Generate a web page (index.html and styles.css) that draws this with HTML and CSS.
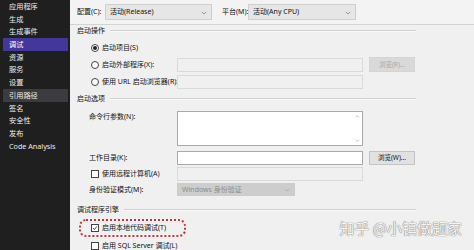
FILE: index.html
```html
<!DOCTYPE html>
<html lang="zh-CN">
<head>
    <meta charset="UTF-8">
    <title>调试</title>
    <link rel="stylesheet" href="styles.css">
</head>
<body>

<div class="sidebar">
    <div class="nav-item">应用程序</div>
    <div class="nav-item">生成</div>
    <div class="nav-item">生成事件</div>
    <div class="nav-item selected">调试</div>
    <div class="nav-item">资源</div>
    <div class="nav-item">服务</div>
    <div class="nav-item">设置</div>
    <div class="nav-item hover">引用路径</div>
    <div class="nav-item">签名</div>
    <div class="nav-item">安全性</div>
    <div class="nav-item">发布</div>
    <div class="nav-item">Code Analysis</div>
</div>

<div class="main">
    <!-- config / platform -->
    <div class="top-row">
        <span class="top-label">配置(C):</span>
        <div class="select config-select">活动(Release)<svg class="chev" viewBox="0 0 8 5"><polyline points="1,1 4,4 7,1"/></svg></div>
        <span class="top-label platform-label">平台(M):</span>
        <div class="select platform-select">活动(Any CPU)<svg class="chev" viewBox="0 0 8 5"><polyline points="1,1 4,4 7,1"/></svg></div>
    </div>

    <div class="content">
        <div class="group-header"><span>启动操作</span><div class="rule"></div></div>

        <div class="row radio-row first">
            <span class="radio checked"></span><span class="opt-text">启动项目(S)</span>
        </div>
        <div class="row radio-row">
            <span class="radio"></span><span class="opt-text field-label">启动外部程序(X):</span>
            <div class="textbox disabled"></div>
            <div class="button disabled">浏览(R)...</div>
        </div>
        <div class="row radio-row">
            <span class="radio"></span><span class="opt-text field-label">使用 URL 启动浏览器(R):</span>
            <div class="textbox disabled"></div>
        </div>

        <div class="group-header second"><span>启动选项</span><div class="rule"></div></div>

        <div class="row args-row">
            <span class="plain-label">命令行参数(N):</span>
            <div class="textarea">
                <svg class="scroll-up" viewBox="0 0 6 4"><polyline points="1,3 3,1 5,3"/></svg>
                <svg class="scroll-down" viewBox="0 0 6 4"><polyline points="1,1 3,3 5,1"/></svg>
            </div>
        </div>
        <div class="row dir-row">
            <span class="plain-label">工作目录(K):</span>
            <div class="textbox"></div>
            <div class="button">浏览(W)...</div>
        </div>
        <div class="row remote-row">
            <span class="checkbox"></span><span class="opt-text field-label">使用远程计算机(A)</span>
            <div class="textbox disabled"></div>
        </div>
        <div class="row auth-row">
            <span class="plain-label">身份验证模式(M):</span>
            <div class="select auth-select">Windows 身份验证<svg class="chev" viewBox="0 0 8 5"><polyline points="1,1 4,4 7,1"/></svg></div>
        </div>

        <div class="group-header third"><span>调试程序引擎</span><div class="rule"></div></div>

        <div class="highlight">
            <span class="checkbox"><svg viewBox="0 0 8 8"><polyline points="1.5,4 3.3,6 6.5,1.8"/></svg></span><span class="opt-text">启用本地代码调试(T)</span>
        </div>
        <div class="row sql-row">
            <span class="checkbox"></span><span class="opt-text">启用 SQL Server 调试(L)</span>
        </div>
    </div>

    <div class="watermark">知乎 @小镇做题家</div>
</div>

</body>
</html>
```

FILE: styles.css
```css
html, body {
    margin: 0;
    padding: 0;
    width: 474px;
    height: 250px;
    overflow: hidden;
}

body {
    display: flex;
    font-family: "Noto Sans", "Noto Sans CJK SC", sans-serif;
    font-size: 7px;
    line-height: 12px;
    color: #111;
    white-space: nowrap;
}

.sidebar {
    width: 70px;
    flex-shrink: 0;
    background-color: #1f1f1f;
    padding: 0 2px 0 3px;
    box-sizing: border-box;
}

.nav-item {
    height: 12.7px;
    line-height: 12.7px;
    padding-left: 6px;
    color: #ececec;
    font-size: 7.2px;
}

.nav-item.selected {
    background-color: #43379a;
    color: #fff;
}

.nav-item.hover {
    background-color: #3c3c40;
}

.main {
    flex: 1;
    position: relative;
    background-color: #f0f0f0;
}

.top-row {
    height: 24px;
    display: flex;
    align-items: center;
    padding-left: 7px;
    border-bottom: 1px solid #d3d3d3;
    background-color: #f3f3f3;
}

.top-label {
    width: 28px;
    flex-shrink: 0;
}

.platform-label {
    margin-left: 10px;
    width: 26px;
}

.select {
    height: 16px;
    box-sizing: border-box;
    border: 1px solid #cfcfcf;
    background-color: #e6e6e6;
    display: flex;
    align-items: center;
    padding-left: 4px;
    position: relative;
    flex-shrink: 0;
}

.config-select {
    width: 107px;
}

.platform-select {
    width: 108px;
}

.chev {
    position: absolute;
    right: 4px;
    top: 6px;
    width: 6px;
    height: 4px;
    fill: none;
    stroke: #777;
    stroke-width: 1;
}

.content {
    width: 339px;
    padding-left: 7px;
}

.group-header {
    height: 12px;
    display: flex;
    align-items: center;
}

.group-header span {
    margin-right: 5px;
}

.group-header.second {
    margin-top: 3px;
}

.group-header.third {
    margin-top: 8px;
}

.rule {
    flex: 1;
    height: 1px;
    background-color: #d0d0d0;
    border-bottom: 1px solid #fafafa;
}

.row {
    display: flex;
    align-items: center;
}

.radio-row {
    height: 17px;
    padding-left: 14px;
}

.radio-row.first {
    margin-top: 2px;
}

.radio {
    width: 6px;
    height: 6px;
    flex-shrink: 0;
    border: 1px solid #444;
    border-radius: 50%;
    background-color: #fff;
    margin-right: 3px;
    position: relative;
}

.radio.checked::after {
    content: "";
    position: absolute;
    left: 1px;
    top: 1px;
    width: 4px;
    height: 4px;
    border-radius: 50%;
    background-color: #222;
}

.checkbox {
    width: 6px;
    height: 6px;
    flex-shrink: 0;
    border: 1px solid #444;
    background-color: #fff;
    margin-right: 3px;
    display: flex;
}

.checkbox svg {
    width: 6px;
    height: 6px;
    fill: none;
    stroke: #222;
    stroke-width: 1.1;
}

.field-label {
    width: 75px;
    flex-shrink: 0;
}

.plain-label {
    width: 88px;
    padding-left: 12px;
    flex-shrink: 0;
}

.textbox {
    width: 186px;
    height: 14px;
    flex-shrink: 0;
    box-sizing: border-box;
    border: 1px solid #a9a9a9;
    background-color: #fff;
}

.textbox.disabled {
    border-color: #dadada;
    background-color: #f0f0f0;
}

.button {
    margin-left: 6px;
    width: 46px;
    height: 15px;
    flex-shrink: 0;
    box-sizing: border-box;
    border: 1px solid #c4c4c4;
    background-color: #e1e1e1;
    text-align: center;
    line-height: 13px;
    font-size: 6.5px;
}

.button.disabled {
    border-color: #d4d4d4;
    background-color: #d9d9d9;
    color: #a8a8a8;
}

.args-row {
    margin-top: 6px;
    align-items: flex-start;
}

.textarea {
    width: 186px;
    height: 35px;
    flex-shrink: 0;
    box-sizing: border-box;
    border: 1px solid #a9a9a9;
    background-color: #fff;
    position: relative;
}

.scroll-up, .scroll-down {
    position: absolute;
    right: 2px;
    width: 5px;
    height: 3px;
    fill: none;
    stroke: #aaa;
    stroke-width: 1;
}

.scroll-up {
    top: 3px;
}

.scroll-down {
    bottom: 3px;
}

.dir-row {
    margin-top: 5px;
    height: 14px;
}

.dir-row .button {
    height: 14px;
    line-height: 12px;
}

.remote-row {
    margin-top: 2px;
    height: 14px;
    padding-left: 14px;
}

.auth-row {
    margin-top: 2px;
    height: 13px;
}

.auth-select {
    width: 118px;
    height: 13px;
    border-color: #cccccc;
    background-color: #cdcdcd;
    color: #8c8c8c;
}

.auth-select .chev {
    top: 4px;
    stroke: #aaa;
}

.highlight {
    margin-top: 3px;
    margin-left: 2px;
    width: 107px;
    height: 18px;
    box-sizing: border-box;
    border: 2px dotted #c8343e;
    border-radius: 7px;
    display: flex;
    align-items: center;
    padding-left: 10px;
}

.sql-row {
    height: 15px;
    padding-left: 14px;
    margin-top: 1px;
}

.watermark {
    position: absolute;
    right: 12px;
    bottom: 12px;
    font-family: "Noto Sans CJK SC", sans-serif;
    font-size: 15px;
    line-height: 20px;
    color: #f4f4f4;
    text-shadow: 0 0 1px #7a7a7a, 0 0 1px #7a7a7a;
}
```
